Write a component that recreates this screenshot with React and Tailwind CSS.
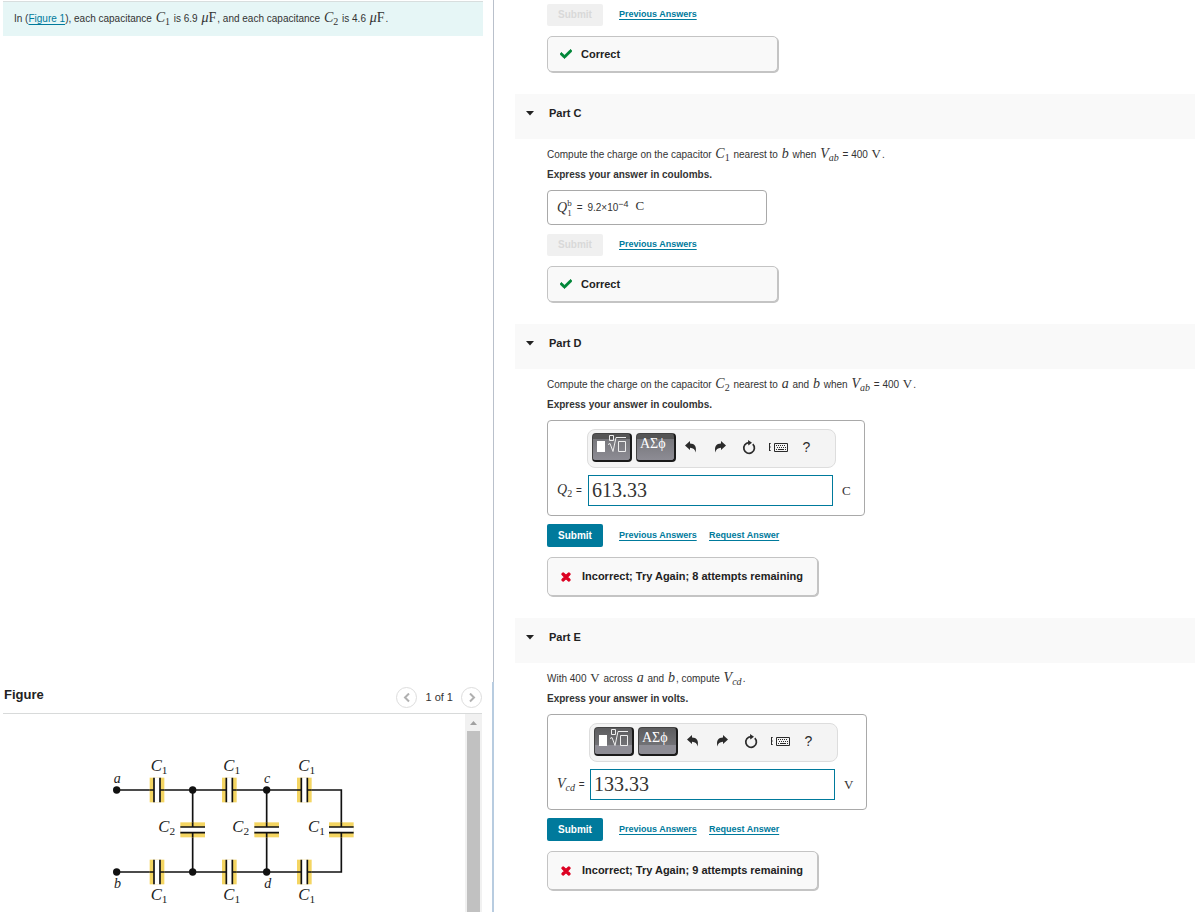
import { useState } from "react";
import { FaCheck, FaTimes } from "react-icons/fa";

const serif = "font-['Liberation_Serif',serif]";

function Sym({ children, sub, upright }) {
  return (
    <span className={`${serif} px-px leading-none ${upright ? "text-[13px]" : "text-[14px] italic"}`}>
      {children}
      {sub && <sub className="bottom-[-3px] text-[10px]">{sub}</sub>}
    </span>
  );
}

function One({ n }) {
  return <span className="not-italic">{n}</span>;
}

function Header({ title }) {
  return (
    <button type="button" className="flex h-[45px] w-full items-center gap-[15px] bg-[#f9f9f9] pb-[7px] pl-[11px] text-left text-[11px] font-bold text-[#222]">
      <svg width="8" height="5" viewBox="0 0 8 5" aria-hidden="true">
        <path d="M0 0h8L4 4.6z" fill="#222" />
      </svg>
      <span>{title}</span>
    </button>
  );
}

function Actions({ disabled, request }) {
  return (
    <div className="flex h-[23px] items-center text-[9px] font-bold">
      <button
        type="button"
        disabled={disabled}
        className={`mr-4 w-14 rounded-xs text-[10px] font-bold ${disabled ? "h-[22px] bg-[#f0f0f0] text-[#d9d9d9]" : "h-full bg-[#007a9c] text-white"}`}
      >
        Submit
      </button>
      <a href="#previous" className="w-[90px] text-[#007a9c] underline underline-offset-2">Previous Answers</a>
      {request && <a href="#request" className="text-[#007a9c] underline underline-offset-2">Request Answer</a>}
    </div>
  );
}

const resultBox = "mt-[10px] mb-[22px] flex items-center rounded-[5px] border border-[#c4c4c4] bg-[#f9f9f9] pl-3 text-[11px] font-bold text-[#222] shadow-[1px_1px_0_#c4c4c4]";

function Correct() {
  return (
    <div className={`${resultBox} h-9 w-[231px] gap-[9px]`}>
      <FaCheck className="size-3 stroke-[#008638] stroke-[30] text-[#008638]" />
      Correct
    </div>
  );
}

function Incorrect({ left }) {
  return (
    <div className={`${resultBox} h-[39px] w-[271px] gap-[10px]`}>
      <FaTimes className="size-3 stroke-[#dc0021] stroke-[50] text-[#dc0021]" />
      Incorrect; Try Again; {left} attempts remaining
    </div>
  );
}

function Prompt({ children, unit }) {
  return (
    <div className="flex flex-col pt-[6px] pb-[5px] text-[10px] leading-5 text-[#333]">
      <p className="h-5 whitespace-nowrap">{children}</p>
      <p className="h-5 font-bold">Express your answer in {unit}.</p>
    </div>
  );
}

const tool = "flex h-7 w-[29px] items-center justify-center text-[#2b2b2b]";
const dark = "h-[29px] w-10 rounded-sm border border-r-2 border-b-2 border-t-[#444] border-r-[#1a1a1a] border-b-[#1a1a1a] border-l-[#444] bg-linear-to-b text-white";

function Toolbar({ tone }) {
  return (
    <div className="flex h-[39px] w-[249px] rounded-lg border border-[#ddd] bg-[#f4f4f4] pt-[3px] pl-1">
      <div className="flex gap-1">
        <button type="button" aria-label="Templates" className={`${dark} ${tone}`}>
          <svg width="37" height="26" viewBox="0 0 37 26" fill="none" stroke="#eee" aria-hidden="true">
            <path d="M4 7h8v11H4z" fill="#fff" stroke="none" />
            <path d="M16.5 1.500h4v5h-4zM15 10.500l2-1 3 8 3-14h10M25.500 7.500h7v10h-7z" />
          </svg>
        </button>
        <button type="button" aria-label="Greek symbols" className={`${dark} ${tone} ${serif} flex items-start pt-[2px] pl-[3px] text-[14px] leading-4`}>
          ΑΣϕ
        </button>
      </div>
      <div className="flex">
        <button type="button" aria-label="Undo" className={tool}>
          <svg width="12" height="12" viewBox="0 0 12 12" fill="currentColor" aria-hidden="true">
            <path d="M0 4.500 5 0v2.500c4.600.1 7 3 5.500 9C10.200 8.500 8.300 7 5 6.800V9z" />
          </svg>
        </button>
        <button type="button" aria-label="Redo" className={tool}>
          <svg width="12" height="12" viewBox="0 0 12 12" fill="currentColor" aria-hidden="true">
            <path d="M12 4.500 7 0v2.500C2.400 2.600 0 5.500 1.500 11.500 1.800 8.500 3.700 7 7 6.800V9z" />
          </svg>
        </button>
        <button type="button" aria-label="Reset" className={tool}>
          <svg width="14" height="15" viewBox="0 0 14 15" fill="none" stroke="currentColor" strokeWidth="1.700" aria-hidden="true">
            <path d="M10.800 4.200A5.300 5.300 0 1 1 7 2.700" />
            <path d="M6 0 10 2.800 6.300 5.600z" fill="currentColor" stroke="none" />
          </svg>
        </button>
        <button type="button" aria-label="Keyboard" className={tool}>
          <svg width="20" height="10" viewBox="0 0 20 10" fill="none" stroke="currentColor" aria-hidden="true">
            <path d="M1.500 1v8" />
            <path d="M2 1.500h1M2 8.500h1M2 5h1" strokeWidth=".7" />
            <path d="M6.500 1.500h13v8h-13z" />
            <path d="M8 3.500h10M9 5.500h9" strokeDasharray="1 1" />
            <path d="M8 7.500h1M10 7.500h6M17 7.500h1" />
          </svg>
        </button>
        <button type="button" aria-label="Help" className={`${tool} text-[14px]`}>?</button>
      </div>
    </div>
  );
}

function AnswerEntry({ id, label, unit, initial, tone, labelWidth }) {
  const [value, setValue] = useState(initial);
  return (
    <div className="mb-2 flex h-24 w-fit flex-col gap-[7px] rounded-sm border border-[#a9a9a9] pt-2 pr-[13px] pl-2 text-[#333]">
      <div className="flex">
        <span className={labelWidth} />
        <Toolbar tone={tone} />
      </div>
      <div className="flex items-center">
        <label htmlFor={id} className={`${labelWidth} text-[10px] whitespace-nowrap`}>{label}</label>
        <input
          id={id}
          value={value}
          onChange={(e) => setValue(e.target.value)}
          className={`${serif} ml-px h-[31px] w-[245px] border border-[#007a9c] bg-white pl-[3px] text-[20px] text-[#333] outline-none`}
        />
        <span className={`${serif} ml-[9px] w-[9px] text-[13px]`}>{unit}</span>
      </div>
    </div>
  );
}

const horizontal = [
  [171, 120], [388, 120], [613, 120],
  [171, 366], [388, 366], [613, 366],
];
const vertical = [[278, 240], [500, 240], [724, 240]];
const names = [
  [152, 62, 1], [370, 62, 1], [595, 62, 1],
  [152, 450, 1], [370, 450, 1], [595, 450, 1],
  [175, 246, 2], [397, 246, 2], [624, 246, 1],
];

function Circuit() {
  return (
    <svg width="270" height="162" viewBox="0 0 810 486" role="img" aria-label="Capacitor network" className="shrink-0">
      <g stroke="#111" strokeWidth="5" fill="none">
        <path d="M50 120H724V366H50M278 120V366M500 120V366" />
      </g>
      {horizontal.map(([x, y]) => (
        <g key={`${x}-${y}`}>
          <path d={`M${x - 22} ${y - 37}h44v74h-44z`} fill="#f4d562" />
          <path d={`M${x - 10} ${y - 37}h20v74h-20z`} fill="#fff" />
          <path d={`M${x - 22} ${y}h12M${x + 10} ${y}h12M${x - 9} ${y - 37}v74M${x + 9} ${y - 37}v74`} stroke="#111" strokeWidth="5" />
        </g>
      ))}
      {vertical.map(([x, y]) => (
        <g key={x}>
          <path d={`M${x - 37} ${y - 23}h74v45h-74z`} fill="#f4d562" />
          <path d={`M${x - 37} ${y - 9}h74v17h-74z`} fill="#fff" />
          <path d={`M${x} ${y - 23}v14M${x} ${y + 8}v14M${x - 37} ${y - 9}h74M${x - 37} ${y + 8}h74`} stroke="#111" strokeWidth="5" />
        </g>
      ))}
      {[[50, 120], [278, 120], [500, 120], [50, 366], [278, 366], [500, 366]].map(([x, y]) => (
        <circle key={`${x}-${y}`} cx={x} cy={y} r="11" fill="#111" />
      ))}
      <g fill="#222" className="font-['Liberation_Serif',serif]" fontSize="50">
        {names.map(([x, y, n]) => (
          <text key={`${x}-${y}`} x={x} y={y}>
            <tspan fontStyle="italic">C</tspan>
            <tspan dy="9" fontSize="34">{n}</tspan>
          </text>
        ))}
        <g fontStyle="italic" fontSize="42">
          <text x="41" y="99">a</text>
          <text x="42" y="414">b</text>
          <text x="492" y="99">c</text>
          <text x="493" y="414">d</text>
        </g>
      </g>
    </svg>
  );
}

function Pager({ label, d }) {
  return (
    <button type="button" aria-label={label} className="flex size-[21px] items-center justify-center rounded-full border border-[#ddd]">
      <svg width="8" height="10" viewBox="0 0 8 10" fill="none" stroke="#b0b0b0" strokeWidth="2" aria-hidden="true">
        <path d={d} />
      </svg>
    </button>
  );
}

export default function App() {
  return (
    <div className="grid min-h-screen grid-cols-[494fr_701fr] bg-white font-['Liberation_Sans',Arial,sans-serif]">
      <aside className="flex flex-col">
        <div className="flex-1 border-r border-[#b9c0cb] pt-px pr-[10px] pl-[3px]">
          <p className="h-[35px] border-t border-[#d8dede] bg-[#e6f6f6] pt-px pl-[11px] text-[10px] leading-8 whitespace-nowrap text-[#333]">
            In (<a href="#figure" className="text-[#007a9c] underline underline-offset-2">Figure 1</a>), each capacitance <Sym sub={<One n="1" />}>C</Sym> is 6.9 <Sym>μ<One n="F" /></Sym>, and each capacitance <Sym sub={<One n="2" />}>C</Sym> is 4.6 <Sym>μ<One n="F" /></Sym>.
          </p>
        </div>
        <section id="figure" className="border-r-2 border-[#b8cce0] pr-[10px] pl-[3px]">
          <div className="flex h-8 items-center justify-between border-b border-[#d8dada]">
            <h2 className="pb-[6px] pl-px text-[13px] font-bold text-[#222]">Figure</h2>
            <div className="flex items-center gap-2 text-[11px] text-[#333]">
              <Pager label="Previous figure" d="M6 .5 2 4.500l4 4" />
              <span>1 of 1</span>
              <Pager label="Next figure" d="M2 .5 6 4.500l-4 4" />
            </div>
          </div>
          <div className="flex h-[198px]">
            <div className="flex flex-1 justify-center pt-9 pl-[2px]">
              <Circuit />
            </div>
            <div className="flex w-[17px] flex-col items-center bg-[#f1f1f1]">
              <svg width="17" height="17" viewBox="0 0 17 17" aria-hidden="true">
                <path d="M5 11h7L8.500 7z" fill="#a0a0a0" />
              </svg>
              <div className="w-[13px] flex-1 bg-[#c1c1c1]" />
            </div>
          </div>
        </section>
      </aside>

      <main className="pt-[3px] pl-[21px]">
        <div className="pl-8">
          <Actions disabled />
          <Correct />
        </div>

        <Header title="Part C" />
        <div className="pl-8">
          <Prompt unit="coulombs">
            Compute the charge on the capacitor <Sym sub={<One n="1" />}>C</Sym> nearest to <Sym>b</Sym> when <Sym sub="ab">V</Sym> = 400 <Sym upright>V</Sym>.
          </Prompt>
          <div className="mb-2 flex h-[35px] w-[220px] items-center gap-[5px] rounded-sm border border-[#a9a9a9] pl-[9px] text-[10px] text-[#333]">
            <span className={`${serif} flex items-center text-[14px]`}>
              <i>Q</i>
              <span className="flex flex-col text-[9px] leading-[10px]">
                <span>b</span>
                <span>1</span>
              </span>
            </span>
            <span>=</span>
            <span>9.2×10<sup className="text-[9px]">−4</sup></span>
            <span className={`${serif} pb-[3px] pl-[2px] text-[13px]`}>C</span>
          </div>
          <Actions disabled />
          <Correct />
        </div>

        <Header title="Part D" />
        <div className="pl-8">
          <Prompt unit="coulombs">
            Compute the charge on the capacitor <Sym sub={<One n="2" />}>C</Sym> nearest to <Sym>a</Sym> and <Sym>b</Sym> when <Sym sub="ab">V</Sym> = 400 <Sym upright>V</Sym>.
          </Prompt>
          <AnswerEntry
            id="answer-d"
            label={<><Sym sub={<One n="2" />}>Q</Sym> =</>}
            unit="C"
            initial="613.33"
            tone="from-[#555] from-20% via-[#77777c] via-20% to-[#8d8c94]"
            labelWidth="w-[31px]"
          />
          <Actions request />
          <Incorrect left={8} />
        </div>

        <Header title="Part E" />
        <div className="pl-8">
          <Prompt unit="volts">
            With 400 <Sym upright>V</Sym> across <Sym>a</Sym> and <Sym>b</Sym>, compute <Sym sub="cd">V</Sym>.
          </Prompt>
          <AnswerEntry
            id="answer-e"
            label={<><Sym sub="cd">V</Sym> =</>}
            unit="V"
            initial="133.33"
            tone="from-[#5c5c5e] via-[#727276] via-65% to-[#8d8c94] to-65%"
            labelWidth="w-[33px]"
          />
          <Actions request />
          <Incorrect left={9} />
        </div>
      </main>
    </div>
  );
}
